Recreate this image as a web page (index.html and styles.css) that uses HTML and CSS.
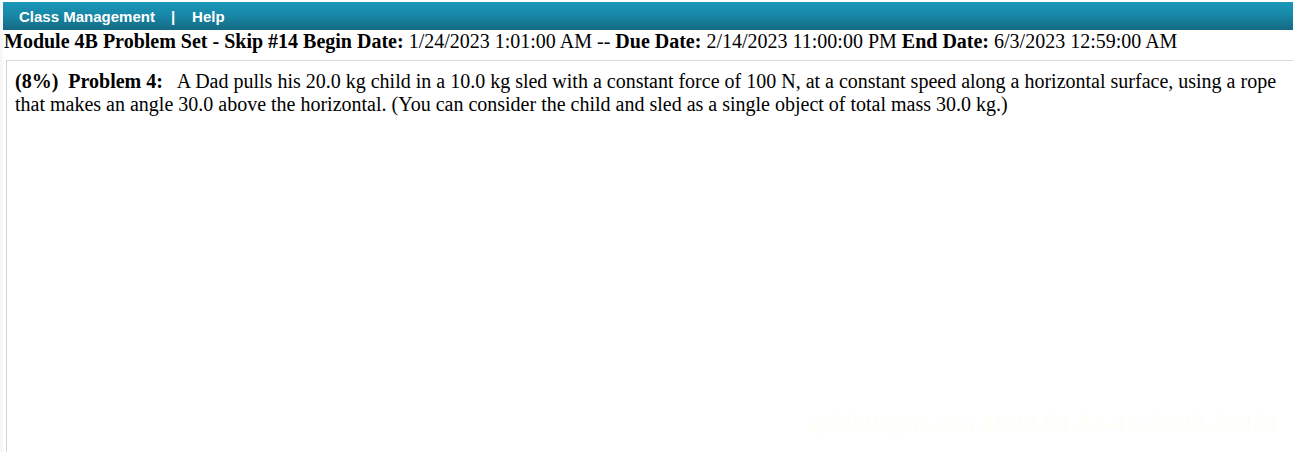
FILE: index.html
```html
<!DOCTYPE html>
<html>
<head>
<meta charset="utf-8">
<title>Module 4B Problem Set</title>
<link rel="stylesheet" href="styles.css">
</head>
<body>
<div class="page">
  <div class="topbar">
    <a class="navlink" href="#">Class Management</a>
    <span class="sep">|</span>
    <a class="navlink" href="#">Help</a>
  </div>
  <div class="title"><b>Module 4B Problem Set - Skip #14 Begin Date:</b> 1/24/2023 1:01:00 AM -- <b>Due Date:</b> 2/14/2023 11:00:00 PM <b>End Date:</b> 6/3/2023 12:59:00 AM</div>
  <div class="box">
    <p class="problem"><b>(8%)&nbsp; Problem 4:&nbsp;&nbsp;</b> A Dad pulls his 20.0 kg child in a 10.0 kg sled with a constant force of 100 N, at a constant speed along a horizontal surface, using a rope that makes an angle 30.0 above the horizontal. (You can consider the child and sled as a single object of total mass 30.0 kg.)</p>
  </div>
  <div class="watermark">sp5938@nt.edu 4N89-S1-14-4C-8D9B-38481</div>
</div>
</body>
</html>
```
FILE: styles.css
```css
html, body {
  margin: 0;
  padding: 0;
  background: #ffffff;
  overflow: hidden;
}
.page {
  position: relative;
  height: 452px;
  background: linear-gradient(to right, #f7f7f7 0, #f7f7f7 3px, #ffffff 3px);
  font-family: "Liberation Serif", "Times New Roman", serif;
  color: #000;
}
.topbar {
  margin: 2px 0 0 3px;
  height: 28px;
  background: linear-gradient(to bottom, #1b97ba 0%, #1888a8 45%, #146a83 100%);
  display: flex;
  align-items: center;
  padding-left: 16px;
  font-family: "Liberation Sans", Arial, sans-serif;
  font-weight: bold;
  font-size: 15px;
  color: #fff;
}
.navlink {
  color: #fff;
  text-decoration: none;
}
.sep {
  margin: 0 17px 0 16px;
}
.title {
  margin-left: 4px;
  font-size: 20px;
  line-height: 23px;
  white-space: nowrap;
}
.box {
  margin: 7px 0 0 6px;
  border-top: 1px solid #dcdcdc;
  border-left: 1px solid #d4d4d4;
  padding: 9px 6px 0 8px;
  height: 400px;
  background: #fff;
}
.problem {
  margin: 0;
  font-size: 20px;
  line-height: 23px;
}
.watermark {
  position: absolute;
  left: 808px;
  top: 410px;
  font-family: "DejaVu Sans", sans-serif;
  font-size: 21px;
  color: #fffef6;
  white-space: nowrap;
}
```
